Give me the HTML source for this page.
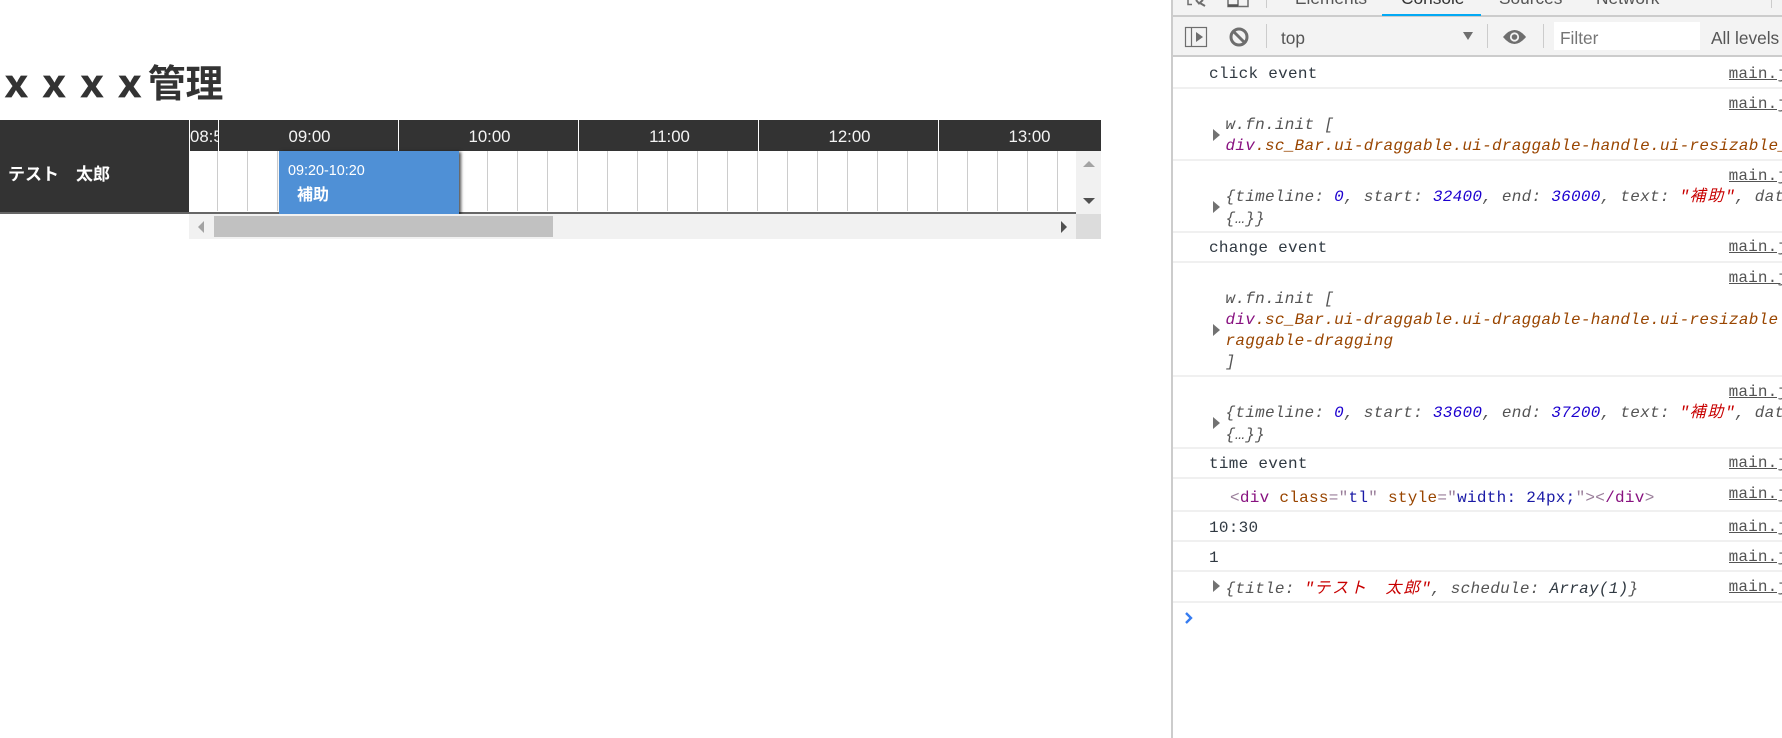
<!DOCTYPE html>
<html><head><meta charset="utf-8"><style>
html,body{margin:0;padding:0;background:#fff;width:1782px;height:738px;overflow:hidden}
body{position:relative;font-family:"Liberation Sans","Noto Sans CJK JP",sans-serif}
.a{position:absolute}
.h{position:absolute;top:120px;height:31px;line-height:33px;color:#f4f4f4;font-size:16.8px;text-align:center;overflow:hidden;border-left:1px solid #fff;box-sizing:border-box;padding-left:2px}
.t{position:absolute;white-space:pre;margin-top:1.5px;font:16px/21px "Liberation Mono","Noto Sans CJK JP",monospace;letter-spacing:.27px;color:#303942}
.i{font-style:italic;color:#545454}
.c{letter-spacing:1.8px}
.m{position:absolute;left:1728.6px;width:54px;overflow:hidden;white-space:pre;margin-top:1px;font:16px/21px "Liberation Mono",monospace;letter-spacing:.17px;color:#545454;text-decoration:underline}
.b{position:absolute;left:1173px;right:0;height:2px;background:#f0f0f0}
.r{position:absolute;left:1213px;width:0;height:0;border-left:7px solid #727272;border-top:6px solid transparent;border-bottom:6px solid transparent}
.u{position:absolute;font-size:17.3px;line-height:20px;color:#555;white-space:pre}
.p{color:#881280}.o{color:#994500}.v{color:#1a1aa6}.n{color:#1c00cf}.q{color:#c80000}.g{color:#9a7e9a}.k{color:#545454}
</style></head><body>

<div class="a" style="left:-2.5px;top:61.5px;font-size:37.8px;line-height:46px;font-weight:bold;color:#333;white-space:pre"><span style="-webkit-text-stroke:.8px #333">ｘｘｘｘ</span><span style="position:relative;left:-1px">管理</span></div>

<div class="a" style="left:0;top:120px;width:1101px;height:31px;background:#333"></div>
<div class="a" style="left:0;top:120px;width:189px;height:92px;background:#333"></div>
<div class="a" style="left:8px;top:163.5px;font-size:17px;line-height:22px;font-weight:bold;color:#fff;white-space:pre">テスト　太郎</div>
<div class="h" style="left:189px;width:29px;text-align:left;padding-left:0">08:5</div>
<div class="h" style="left:218px;width:180px">09:00</div>
<div class="h" style="left:398px;width:180px">10:00</div>
<div class="h" style="left:578px;width:180px">11:00</div>
<div class="h" style="left:758px;width:180px">12:00</div>
<div class="h" style="left:938px;width:180px;clip-path:inset(0 17px 0 0)">13:00</div>

<div class="a" style="left:189px;top:151px;width:887px;height:60px;background:repeating-linear-gradient(90deg,#fff 0,#fff 28px,#ccc 28px,#ccc 29px,#fff 29px,#fff 30px)"></div>
<div class="a" style="left:0;top:212px;width:1076px;height:2px;background:#666"></div>

<div class="a" style="left:279px;top:151px;width:180px;height:63px;background:#4f90d6;box-shadow:2px 1px 3px rgba(0,0,0,.7)"></div>
<div class="a" style="left:288px;top:161.5px;color:#fff;font-size:14.4px;line-height:18px;white-space:pre">09:20-10:20</div>
<div class="a" style="left:297px;top:184.5px;color:#fff;font-size:16px;line-height:22px;font-weight:bold;white-space:pre">補助</div>

<div class="a" style="left:1076px;top:151px;width:25px;height:63px;background:#f1f1f1"></div>
<div class="a" style="left:1083px;top:161px;width:0;height:0;border-left:6px solid transparent;border-right:6px solid transparent;border-bottom:6px solid #a3a3a3"></div>
<div class="a" style="left:1083px;top:198px;width:0;height:0;border-left:6px solid transparent;border-right:6px solid transparent;border-top:6px solid #505050"></div>
<div class="a" style="left:189px;top:214px;width:887px;height:25px;background:#f1f1f1"></div>
<div class="a" style="left:1076px;top:214px;width:25px;height:25px;background:#dcdcdc"></div>
<div class="a" style="left:214px;top:216px;width:339px;height:21px;background:#c1c1c1"></div>
<div class="a" style="left:198px;top:221px;width:0;height:0;border-right:6px solid #a3a3a3;border-top:6px solid transparent;border-bottom:6px solid transparent"></div>
<div class="a" style="left:1061px;top:221px;width:0;height:0;border-left:6px solid #505050;border-top:6px solid transparent;border-bottom:6px solid transparent"></div>

<!-- devtools -->
<div class="a" style="left:1171px;top:0;width:2px;height:738px;background:#ccc"></div>
<div class="a" style="left:1173px;top:0;right:0;height:55px;background:#f3f3f3"></div>
<div class="a" style="left:1173px;top:15px;right:0;height:2px;background:#ccc"></div>
<div class="a" style="left:1173px;top:55px;right:0;height:2px;background:#ccc"></div>
<div class="a" style="left:1382px;top:14px;width:99px;height:2px;background:#03a9f4"></div>

<div class="u" style="left:1295px;top:-12px">Elements</div>
<div class="u" style="left:1401px;top:-12px;color:#333">Console</div>
<div class="u" style="left:1499px;top:-12px">Sources</div>
<div class="u" style="left:1596px;top:-12px">Network</div>
<div class="u" style="left:1696px;top:-15px;font-weight:bold">»</div>

<svg class="a" style="left:1173px;top:0" width="609" height="55" viewBox="1173 0 609 55" fill="none">
  <path d="M1188 0V4.5H1192" stroke="#6e6e6e" stroke-width="1.5"/>
  <path d="M1196 0L1199 3.5L1203 0M1200 3L1205 6" stroke="#6e6e6e" stroke-width="2"/>
  <path d="M1228 0V6.5H1248V0M1238 0V6.5" stroke="#6e6e6e" stroke-width="1.5"/>
  <path d="M1228 5.5H1238" stroke="#555" stroke-width="2.5"/>
  <rect x="1266" y="0" width="1" height="8" fill="#ccc"/>
  <rect x="1771" y="0" width="1" height="8" fill="#ccc"/>
  <rect x="1185.5" y="27.5" width="21" height="19" stroke="#6e6e6e" stroke-width="1.2"/>
  <path d="M1191.5 27.5V46.5" stroke="#6e6e6e" stroke-width="1.2"/>
  <path d="M1196 32L1203 37L1196 42Z" fill="#6e6e6e"/>
  <circle cx="1239" cy="37" r="8" stroke="#6e6e6e" stroke-width="3"/>
  <path d="M1233.5 31.5L1244.5 42.5" stroke="#6e6e6e" stroke-width="3"/>
  <rect x="1266" y="24" width="1" height="24" fill="#ccc"/>
  <path d="M1463 32H1473L1468 40Z" fill="#6e6e6e"/>
  <rect x="1487" y="24" width="1" height="24" fill="#ccc"/>
  <path d="M1503 37Q1514.5 23 1526 37Q1514.5 51 1503 37Z" fill="#6e6e6e"/>
  <circle cx="1514.5" cy="37" r="4.6" fill="#f3f3f3"/>
  <circle cx="1514.5" cy="37" r="2.8" fill="#6e6e6e"/>
  <rect x="1543" y="24" width="1" height="24" fill="#ccc"/>
  <rect x="1554" y="22" width="146" height="28" fill="#fff"/>
</svg>
<div class="u" style="left:1281px;top:28px">top</div>
<div class="u" style="left:1560px;top:27.5px;color:#757575">Filter</div>
<div class="u" style="left:1711px;top:27.5px">All levels</div>

<!-- console -->
<div class="t" style="left:1209px;top:62px">click event</div><div class="m" style="top:63px">main.j</div><div class="b" style="top:87px"></div>

<div class="m" style="top:93px">main.j</div>
<div class="r" style="top:129px"></div>
<div class="t i" style="left:1225.5px;top:113px">w.fn.init [</div>
<div class="t i" style="left:1225.5px;top:134px;width:556px;overflow:hidden"><span class="p">div</span><span class="o">.sc_Bar.ui-draggable.ui-draggable-handle.ui-resizable_</span></div>
<div class="b" style="top:159px"></div>

<div class="m" style="top:165px">main.j</div>
<div class="r" style="top:201px"></div>
<div class="t i" style="left:1225.5px;top:185.5px;width:556px;overflow:hidden">{timeline: <span class="n">0</span>, start: <span class="n">32400</span>, end: <span class="n">36000</span>, text: <span class="q">"<span class="c">補助</span>"</span>, dat</div>
<div class="t i" style="left:1225.5px;top:207px">{…}}</div>
<div class="b" style="top:231px"></div>

<div class="t" style="left:1209px;top:236px">change event</div><div class="m" style="top:236px">main.j</div><div class="b" style="top:261px"></div>

<div class="m" style="top:266.5px">main.j</div>
<div class="r" style="top:324px"></div>
<div class="t i" style="left:1225.5px;top:287px">w.fn.init [</div>
<div class="t i" style="left:1225.5px;top:308px;width:556px;overflow:hidden"><span class="p">div</span><span class="o">.sc_Bar.ui-draggable.ui-draggable-handle.ui-resizable</span></div>
<div class="t i" style="left:1225.5px;top:329.5px"><span class="o">raggable-dragging</span></div>
<div class="t i" style="left:1225.5px;top:350.5px">]</div>
<div class="b" style="top:375px"></div>

<div class="m" style="top:381px">main.j</div>
<div class="r" style="top:417px"></div>
<div class="t i" style="left:1225.5px;top:401px;width:556px;overflow:hidden">{timeline: <span class="n">0</span>, start: <span class="n">33600</span>, end: <span class="n">37200</span>, text: <span class="q">"<span class="c">補助</span>"</span>, dat</div>
<div class="t i" style="left:1225.5px;top:423.5px">{…}}</div>
<div class="b" style="top:447px"></div>

<div class="t" style="left:1209px;top:452.5px">time event</div><div class="m" style="top:452px">main.j</div><div class="b" style="top:477px"></div>

<div class="t" style="left:1230px;top:486px"><span class="g">&lt;</span><span class="p">div</span> <span class="o">class</span><span class="g">="</span><span class="v">tl</span><span class="g">"</span> <span class="o">style</span><span class="g">="</span><span class="v">width: 24px;</span><span class="g">"&gt;&lt;</span><span class="p">/div</span><span class="g">&gt;</span></div><div class="m" style="top:483px">main.j</div><div class="b" style="top:510px"></div>

<div class="t" style="left:1209px;top:516px">10:30</div><div class="m" style="top:516px">main.j</div><div class="b" style="top:540px"></div>

<div class="t" style="left:1209px;top:546.5px">1</div><div class="m" style="top:546px">main.j</div><div class="b" style="top:570px"></div>

<div class="r" style="top:580px"></div>
<div class="t i" style="left:1225.5px;top:577.5px">{title: <span class="q">"<span class="c">テスト　太郎</span>"</span>, schedule: <span style="color:#303942">Array(1)</span>}</div><div class="m" style="top:576px">main.j</div><div class="b" style="top:601px"></div>

<svg class="a" style="left:1183px;top:611px" width="12" height="14" viewBox="0 0 12 14"><path d="M3 2L8 7L3 12" fill="none" stroke="#367cf1" stroke-width="2.4"/></svg>

</body></html>
